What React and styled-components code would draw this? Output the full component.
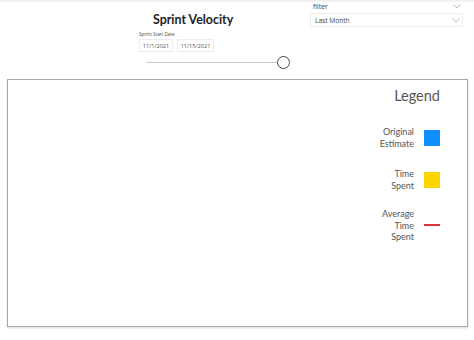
import React from "react";
import styled, { createGlobalStyle } from "styled-components";

const GlobalStyle = createGlobalStyle`
  html, body {
    margin: 0;
    padding: 0;
    background: #ffffff;
  }
  body {
    font-family: "Open Sans", "Liberation Sans", sans-serif;
    color: #333;
  }
`;

const legendItems = [
  { label: ["Original", "Estimate"], kind: "square", color: "#118dff" },
  { label: ["Time", "Spent"], kind: "square", color: "#ffd500" },
  { label: ["Average", "Time", "Spent"], kind: "line", color: "#d9303a" },
];

const Page = styled.div`
  width: 474px;
  height: 340px;
  display: flex;
  flex-direction: column;
  background: linear-gradient(#ececec, #ffffff 3px);
`;

const Header = styled.div`
  height: 79px;
  display: flex;
  padding-left: 139px;
  box-sizing: border-box;
`;

const SlicerBlock = styled.div`
  width: 160px;
  display: flex;
  flex-direction: column;
`;

const Title = styled.div`
  font-family: "Lato", "Open Sans", sans-serif;
  font-weight: 700;
  font-size: 12.4px;
  color: #222;
  margin: 13px 0 0 14px;
  line-height: 14px;
`;

const SmallLabel = styled.div`
  font-size: 4.6px;
  color: #444;
  margin-top: 4px;
  line-height: 6px;
`;

const DateRow = styled.div`
  display: flex;
  gap: 4px;
  margin-top: 2px;
`;

const DateBox = styled.div`
  width: ${(p) => p.w}px;
  height: 13px;
  border: 1px solid #ececec;
  box-sizing: border-box;
  font-size: 5.6px;
  color: #555;
  display: flex;
  align-items: center;
  justify-content: center;
`;

const SliderRow = styled.div`
  display: flex;
  align-items: center;
  margin: 3px 0 0 7px;
  height: 14px;
`;

const Track = styled.div`
  width: 131px;
  height: 1px;
  background: #c8c8c8;
`;

const Thumb = styled.div`
  width: 13px;
  height: 13px;
  border-radius: 50%;
  border: 1.5px solid #444;
  box-sizing: border-box;
  background: #fff;
`;

const FilterBlock = styled.div`
  margin-left: 11px;
  width: 153px;
  display: flex;
  flex-direction: column;
`;

const FilterHead = styled.div`
  height: 14px;
  display: flex;
  align-items: center;
  justify-content: space-between;
  border-bottom: 1px solid #ececec;
  box-sizing: border-box;
  padding: 0 2px 0 3px;
  font-size: 6.8px;
  color: #444;
`;

const FilterBox = styled.div`
  height: 13px;
  display: flex;
  align-items: center;
  justify-content: space-between;
  border: 1px solid #ececec;
  border-top: none;
  box-sizing: border-box;
  padding: 0 2px 0 4px;
  font-size: 6.6px;
  color: #444;
`;

const Chevron = () => (
  <svg width="8" height="5" viewBox="0 0 8 5">
    <path d="M0.5 0.5 L4 4 L7.5 0.5" fill="none" stroke="#a8a8a8" strokeWidth="0.8" />
  </svg>
);

const ChartBox = styled.div`
  margin: 0 6px 0 7px;
  height: 248px;
  border: 1px solid #a8a8a8;
  box-shadow: 0 1px 2px rgba(0, 0, 0, 0.15);
  box-sizing: border-box;
  display: flex;
  justify-content: flex-end;
`;

const Legend = styled.div`
  display: flex;
  flex-direction: column;
  align-items: flex-end;
  padding: 7px 27px 0 0;
  font-family: "Lato", "Open Sans", sans-serif;
`;

const LegendTitle = styled.div`
  font-size: 14.5px;
  color: #555;
  line-height: 18px;
  margin-bottom: 21px;
`;

const LegendItem = styled.div`
  display: flex;
  align-items: center;
  gap: 10px;
  margin-bottom: ${(p) => p.gap}px;
`;

const LegendLabel = styled.div`
  font-size: 9px;
  line-height: 11.5px;
  color: #555;
  text-align: right;
`;

const Swatch = styled.div`
  width: 16px;
  height: ${(p) => (p.kind === "line" ? 2 : 16)}px;
  background: ${(p) => p.color};
`;

const App = () => {
  return (
    <Page>
      <GlobalStyle />
      <Header>
        <SlicerBlock>
          <Title>Sprint Velocity</Title>
          <SmallLabel>Sprint Start Date</SmallLabel>
          <DateRow>
            <DateBox w={34}>11/1/2021</DateBox>
            <DateBox w={37}>11/15/2021</DateBox>
          </DateRow>
          <SliderRow>
            <Track />
            <Thumb />
          </SliderRow>
        </SlicerBlock>
        <FilterBlock>
          <FilterHead>
            <span>filter</span>
            <Chevron />
          </FilterHead>
          <FilterBox>
            <span>Last Month</span>
            <Chevron />
          </FilterBox>
        </FilterBlock>
      </Header>
      <ChartBox>
        <Legend>
          <LegendTitle>Legend</LegendTitle>
          {legendItems.map((item, i) => (
            <LegendItem key={i} gap={i === 0 ? 19 : 17}>
              <LegendLabel>
                {item.label.map((l) => (
                  <div key={l}>{l}</div>
                ))}
              </LegendLabel>
              <Swatch kind={item.kind} color={item.color} />
            </LegendItem>
          ))}
        </Legend>
      </ChartBox>
    </Page>
  );
};

export default App;
